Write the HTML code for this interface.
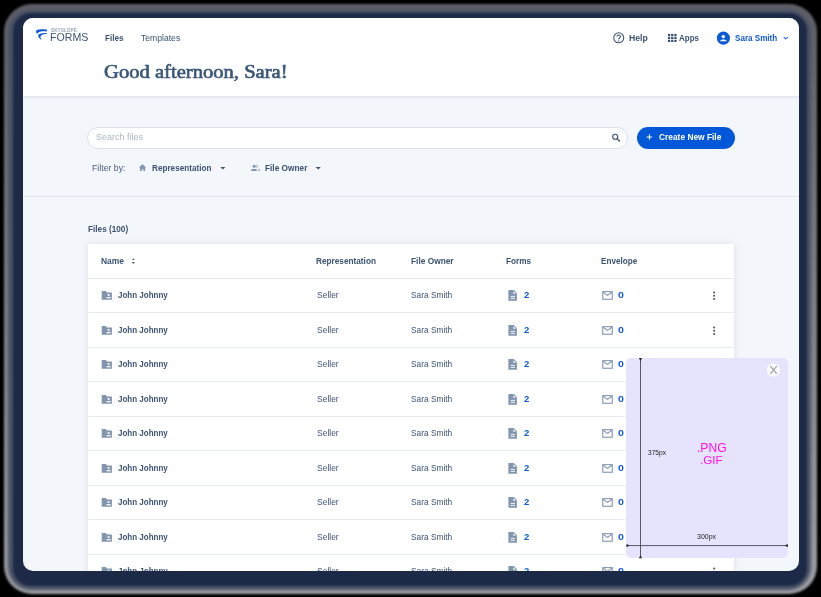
<!DOCTYPE html>
<html><head><meta charset="utf-8">
<style>
*{margin:0;padding:0;box-sizing:border-box}
html,body{width:821px;height:597px;overflow:hidden;background:#000}
body{position:relative;font-family:"Liberation Sans",sans-serif}
.abs{position:absolute}
.noise{position:absolute;left:4px;top:3.5px;width:813px;height:590px;border-radius:28px;background:linear-gradient(#5c5e66,#7c7e86 50%,#9c9ea4);filter:blur(0.8px)}
.noise2{position:absolute;left:8.4px;top:9.5px;width:803px;height:580px;border-radius:23px;background:#4a5164;filter:blur(1.5px)}
.shade{position:absolute;left:13.2px;top:13px;width:794.3px;height:572.5px;border-radius:18px;background:#1c2a48;filter:blur(1.2px)}
.card{position:absolute;left:23px;top:18px;width:776px;height:553px;border-radius:10px;overflow:hidden;background:#f3f6fb}
.header{position:absolute;left:0;top:0;width:776px;height:77.7px;background:#fff;box-shadow:0 1px 3px rgba(40,60,90,.13)}
.t{position:absolute;white-space:nowrap;line-height:1;transform-origin:0 0}
</style></head>
<body>
<div class="noise"></div>
<div class="noise2"></div>
<div class="shade"></div>
<div class="card">
<div class="header"></div>
<svg class="abs" style="left:10px;top:8px" width="18" height="17" viewBox="0 0 18 17">
<path d="M14 3.7 C10.5 3.1 6.5 3.2 4.2 3.9 C3.2 4.2 2.9 5.1 3.1 5.9 C3.3 6.8 4 7.5 4.4 7.8 C4.8 6.8 5.7 6.1 7.1 5.7 C9.1 5.2 12 5.3 14 5.5 Z" fill="#145ad8"/>
<path d="M14 6.9 C11 6.8 8.5 7.1 6.8 7.8 C5.5 8.4 5.0 9.5 5.3 10.6 C5.7 11.9 7.3 13.5 8.9 14.1 C7.8 12.8 7.2 11.3 7.6 10.2 C8.2 8.8 11 8.0 14 7.8 Z" fill="#145ad8"/>
</svg>
<svg class="abs" style="left:589px;top:13px" width="14" height="14" viewBox="612 31 14 14">
<circle cx="618.75" cy="37.8" r="5.0" fill="none" stroke="#3c5372" stroke-width="1.05"/>
<path d="M616.9 36.4 C616.9 35.5 617.7 35 618.7 35 C619.8 35 620.5 35.6 620.5 36.5 C620.5 37.6 618.8 37.8 618.75 38.9 L618.75 39.5" fill="none" stroke="#3c5372" stroke-width="1.05"/>
<circle cx="618.75" cy="41.0" r="0.65" fill="#3c5372"/>
</svg>
<svg class="abs" style="left:643px;top:14px" width="12" height="12" viewBox="666 32 12 12"><rect x="667.90" y="33.90" width="2.3" height="2.2" fill="#3c5372"/><rect x="667.90" y="36.85" width="2.3" height="2.2" fill="#3c5372"/><rect x="667.90" y="39.80" width="2.3" height="2.2" fill="#3c5372"/><rect x="671.10" y="33.90" width="2.3" height="2.2" fill="#3c5372"/><rect x="671.10" y="36.85" width="2.3" height="2.2" fill="#3c5372"/><rect x="671.10" y="39.80" width="2.3" height="2.2" fill="#3c5372"/><rect x="674.30" y="33.90" width="2.3" height="2.2" fill="#3c5372"/><rect x="674.30" y="36.85" width="2.3" height="2.2" fill="#3c5372"/><rect x="674.30" y="39.80" width="2.3" height="2.2" fill="#3c5372"/></svg>
<svg class="abs" style="left:692px;top:12px" width="17" height="17" viewBox="715 30 17 17">
<circle cx="723.4" cy="38.1" r="6.6" fill="#0d5bd9"/>
<circle cx="723.3" cy="36.6" r="1.7" fill="#fff"/>
<path d="M720.0 41.3 C720.3 40.0 721.6 39.4 723.3 39.4 C725.0 39.4 726.4 40.0 726.7 41.3 Z" fill="#fff"/>
</svg>
<svg class="abs" style="left:758px;top:17px" width="9" height="6" viewBox="781 35 9 6"><path d="M783.7 37.1 L785.7 38.9 L787.9 37.1" fill="none" stroke="#1a5fd9" stroke-width="1.1"/></svg>
<div class="abs" style="left:63.900000000000006px;top:109px;width:541.4px;height:21.6px;border-radius:11px;background:#fff;border:1px solid #d9e0ea"></div>
<svg class="abs" style="left:587px;top:113px" width="13" height="13" viewBox="610 131 13 13">
<circle cx="615.2" cy="136.7" r="2.5" fill="none" stroke="#3d5272" stroke-width="1.15"/>
<path d="M617.1 138.6 L619.9 141.4" stroke="#3d5272" stroke-width="1.35"/>
</svg>
<div class="abs" style="left:613.8px;top:109px;width:97.80000000000007px;height:21.6px;border-radius:11px;background:#0058d8"></div>
<svg class="abs" style="left:622px;top:115px" width="9" height="9" viewBox="645 133 9 9"><path d="M649.4 134.3 V139.8 M646.6 137.05 H652.2" stroke="#fff" stroke-width="1.0"/></svg>
<svg class="abs" style="left:115px;top:145px" width="10" height="9" viewBox="138 163 10 9"><path d="M142.45 164.3 L146.1 167.5 L145.15 167.5 L145.15 170.9 L143.3 170.9 L143.3 169.1 L141.8 169.1 L141.8 170.9 L140.0 170.9 L140.0 167.5 L138.9 167.5 Z" fill="#8195ae"/></svg>
<svg class="abs" style="left:196px;top:148px" width="8" height="5" viewBox="219 166 8 5"><path d="M220.3 167.0 H225.3 L222.8 169.5 Z" fill="#3c5372"/></svg>
<svg class="abs" style="left:227px;top:145px" width="11" height="9" viewBox="250 163 11 9">
<circle cx="254.2" cy="166.3" r="1.55" fill="#8195ae"/>
<path d="M256.5 164.9 A1.5 1.5 0 0 1 256.5 167.7" fill="none" stroke="#8195ae" stroke-width="1"/>
<path d="M251.05 171.0 V170.3 C251.05 169.4 252.2 168.9 254.0 168.9 C255.8 168.9 256.9 169.4 256.9 170.3 V171.0 Z" fill="#8195ae"/>
<path d="M258.3 169.0 C259.3 169.2 259.9 169.7 259.9 170.4 V171.0 H258.3 Z" fill="#8195ae"/>
</svg>
<svg class="abs" style="left:292px;top:148px" width="8" height="5" viewBox="315 166 8 5"><path d="M315.7 167.0 H320.8 L318.25 169.5 Z" fill="#3c5372"/></svg>
<div class="abs" style="left:0;top:178px;width:776px;height:1px;background:#dfe5ee"></div>
<div class="abs" style="left:64.8px;top:225.9px;width:646.3000000000001px;height:400px;background:#fff;box-shadow:0 0 6px rgba(60,80,110,.13)"></div>
<svg class="abs" style="left:107px;top:239px" width="6" height="8" viewBox="130 257 6 8"><path d="M133.35 258.5 L134.8 260.1 H131.9 Z M133.35 264.0 L134.8 262.1 H131.9 Z" fill="#3c5372"/></svg>
<div class="abs" style="left:64.5px;top:260px;width:646.6px;height:1px;background:#e2e8f0"></div>
<svg class="abs" style="left:77px;top:272.00px" width="14" height="11" viewBox="100 290 14 11"><path d="M101.7 291.05 H105.8 L107.0 292.6 H111.9 V299.7 H101.7 Z" fill="#8195ae"/><circle cx="108.6" cy="295.0" r="1.1" fill="#fff"/><rect x="106.5" y="297.1" width="4.2" height="1.2" fill="#fff"/></svg>
<svg class="abs" style="left:484px;top:271.00px" width="11" height="13" viewBox="507 289 11 13"><path d="M508.4 290.1 H513.7 L516.9 293.3 V300.8 H508.4 Z" fill="#8195ae"/><path d="M513.4 291.2 V293.7 H515.9 Z" fill="#fff"/><path d="M510.6 296.4 H515.0 M510.6 298.4 H515.0" stroke="#fff" stroke-width="0.9"/></svg>
<svg class="abs" style="left:578px;top:272.00px" width="13" height="11" viewBox="601 290 13 11"><rect x="602.75" y="291.65" width="9.5" height="7.6" fill="none" stroke="#8195ae" stroke-width="1.1"/><path d="M603.1 292.3 L607.5 295.4 L611.9 292.3" fill="none" stroke="#8195ae" stroke-width="1.1"/></svg>
<svg class="abs" style="left:689px;top:272.00px" width="5" height="11" viewBox="712 290 5 11"><circle cx="714.15" cy="292.5" r="1.0" fill="#4a4f58"/><circle cx="714.15" cy="295.75" r="1.0" fill="#4a4f58"/><circle cx="714.15" cy="298.9" r="1.0" fill="#4a4f58"/></svg>
<div class="abs" style="left:64.5px;top:294.40px;width:646.6px;height:1px;background:#e6ebf2"></div>
<svg class="abs" style="left:77px;top:306.50px" width="14" height="11" viewBox="100 290 14 11"><path d="M101.7 291.05 H105.8 L107.0 292.6 H111.9 V299.7 H101.7 Z" fill="#8195ae"/><circle cx="108.6" cy="295.0" r="1.1" fill="#fff"/><rect x="106.5" y="297.1" width="4.2" height="1.2" fill="#fff"/></svg>
<svg class="abs" style="left:484px;top:305.50px" width="11" height="13" viewBox="507 289 11 13"><path d="M508.4 290.1 H513.7 L516.9 293.3 V300.8 H508.4 Z" fill="#8195ae"/><path d="M513.4 291.2 V293.7 H515.9 Z" fill="#fff"/><path d="M510.6 296.4 H515.0 M510.6 298.4 H515.0" stroke="#fff" stroke-width="0.9"/></svg>
<svg class="abs" style="left:578px;top:306.50px" width="13" height="11" viewBox="601 290 13 11"><rect x="602.75" y="291.65" width="9.5" height="7.6" fill="none" stroke="#8195ae" stroke-width="1.1"/><path d="M603.1 292.3 L607.5 295.4 L611.9 292.3" fill="none" stroke="#8195ae" stroke-width="1.1"/></svg>
<svg class="abs" style="left:689px;top:306.50px" width="5" height="11" viewBox="712 290 5 11"><circle cx="714.15" cy="292.5" r="1.0" fill="#4a4f58"/><circle cx="714.15" cy="295.75" r="1.0" fill="#4a4f58"/><circle cx="714.15" cy="298.9" r="1.0" fill="#4a4f58"/></svg>
<div class="abs" style="left:64.5px;top:328.90px;width:646.6px;height:1px;background:#e6ebf2"></div>
<svg class="abs" style="left:77px;top:341.00px" width="14" height="11" viewBox="100 290 14 11"><path d="M101.7 291.05 H105.8 L107.0 292.6 H111.9 V299.7 H101.7 Z" fill="#8195ae"/><circle cx="108.6" cy="295.0" r="1.1" fill="#fff"/><rect x="106.5" y="297.1" width="4.2" height="1.2" fill="#fff"/></svg>
<svg class="abs" style="left:484px;top:340.00px" width="11" height="13" viewBox="507 289 11 13"><path d="M508.4 290.1 H513.7 L516.9 293.3 V300.8 H508.4 Z" fill="#8195ae"/><path d="M513.4 291.2 V293.7 H515.9 Z" fill="#fff"/><path d="M510.6 296.4 H515.0 M510.6 298.4 H515.0" stroke="#fff" stroke-width="0.9"/></svg>
<svg class="abs" style="left:578px;top:341.00px" width="13" height="11" viewBox="601 290 13 11"><rect x="602.75" y="291.65" width="9.5" height="7.6" fill="none" stroke="#8195ae" stroke-width="1.1"/><path d="M603.1 292.3 L607.5 295.4 L611.9 292.3" fill="none" stroke="#8195ae" stroke-width="1.1"/></svg>
<svg class="abs" style="left:689px;top:341.00px" width="5" height="11" viewBox="712 290 5 11"><circle cx="714.15" cy="292.5" r="1.0" fill="#4a4f58"/><circle cx="714.15" cy="295.75" r="1.0" fill="#4a4f58"/><circle cx="714.15" cy="298.9" r="1.0" fill="#4a4f58"/></svg>
<div class="abs" style="left:64.5px;top:363.40px;width:646.6px;height:1px;background:#e6ebf2"></div>
<svg class="abs" style="left:77px;top:375.50px" width="14" height="11" viewBox="100 290 14 11"><path d="M101.7 291.05 H105.8 L107.0 292.6 H111.9 V299.7 H101.7 Z" fill="#8195ae"/><circle cx="108.6" cy="295.0" r="1.1" fill="#fff"/><rect x="106.5" y="297.1" width="4.2" height="1.2" fill="#fff"/></svg>
<svg class="abs" style="left:484px;top:374.50px" width="11" height="13" viewBox="507 289 11 13"><path d="M508.4 290.1 H513.7 L516.9 293.3 V300.8 H508.4 Z" fill="#8195ae"/><path d="M513.4 291.2 V293.7 H515.9 Z" fill="#fff"/><path d="M510.6 296.4 H515.0 M510.6 298.4 H515.0" stroke="#fff" stroke-width="0.9"/></svg>
<svg class="abs" style="left:578px;top:375.50px" width="13" height="11" viewBox="601 290 13 11"><rect x="602.75" y="291.65" width="9.5" height="7.6" fill="none" stroke="#8195ae" stroke-width="1.1"/><path d="M603.1 292.3 L607.5 295.4 L611.9 292.3" fill="none" stroke="#8195ae" stroke-width="1.1"/></svg>
<svg class="abs" style="left:689px;top:375.50px" width="5" height="11" viewBox="712 290 5 11"><circle cx="714.15" cy="292.5" r="1.0" fill="#4a4f58"/><circle cx="714.15" cy="295.75" r="1.0" fill="#4a4f58"/><circle cx="714.15" cy="298.9" r="1.0" fill="#4a4f58"/></svg>
<div class="abs" style="left:64.5px;top:397.90px;width:646.6px;height:1px;background:#e6ebf2"></div>
<svg class="abs" style="left:77px;top:410.00px" width="14" height="11" viewBox="100 290 14 11"><path d="M101.7 291.05 H105.8 L107.0 292.6 H111.9 V299.7 H101.7 Z" fill="#8195ae"/><circle cx="108.6" cy="295.0" r="1.1" fill="#fff"/><rect x="106.5" y="297.1" width="4.2" height="1.2" fill="#fff"/></svg>
<svg class="abs" style="left:484px;top:409.00px" width="11" height="13" viewBox="507 289 11 13"><path d="M508.4 290.1 H513.7 L516.9 293.3 V300.8 H508.4 Z" fill="#8195ae"/><path d="M513.4 291.2 V293.7 H515.9 Z" fill="#fff"/><path d="M510.6 296.4 H515.0 M510.6 298.4 H515.0" stroke="#fff" stroke-width="0.9"/></svg>
<svg class="abs" style="left:578px;top:410.00px" width="13" height="11" viewBox="601 290 13 11"><rect x="602.75" y="291.65" width="9.5" height="7.6" fill="none" stroke="#8195ae" stroke-width="1.1"/><path d="M603.1 292.3 L607.5 295.4 L611.9 292.3" fill="none" stroke="#8195ae" stroke-width="1.1"/></svg>
<svg class="abs" style="left:689px;top:410.00px" width="5" height="11" viewBox="712 290 5 11"><circle cx="714.15" cy="292.5" r="1.0" fill="#4a4f58"/><circle cx="714.15" cy="295.75" r="1.0" fill="#4a4f58"/><circle cx="714.15" cy="298.9" r="1.0" fill="#4a4f58"/></svg>
<div class="abs" style="left:64.5px;top:432.40px;width:646.6px;height:1px;background:#e6ebf2"></div>
<svg class="abs" style="left:77px;top:444.50px" width="14" height="11" viewBox="100 290 14 11"><path d="M101.7 291.05 H105.8 L107.0 292.6 H111.9 V299.7 H101.7 Z" fill="#8195ae"/><circle cx="108.6" cy="295.0" r="1.1" fill="#fff"/><rect x="106.5" y="297.1" width="4.2" height="1.2" fill="#fff"/></svg>
<svg class="abs" style="left:484px;top:443.50px" width="11" height="13" viewBox="507 289 11 13"><path d="M508.4 290.1 H513.7 L516.9 293.3 V300.8 H508.4 Z" fill="#8195ae"/><path d="M513.4 291.2 V293.7 H515.9 Z" fill="#fff"/><path d="M510.6 296.4 H515.0 M510.6 298.4 H515.0" stroke="#fff" stroke-width="0.9"/></svg>
<svg class="abs" style="left:578px;top:444.50px" width="13" height="11" viewBox="601 290 13 11"><rect x="602.75" y="291.65" width="9.5" height="7.6" fill="none" stroke="#8195ae" stroke-width="1.1"/><path d="M603.1 292.3 L607.5 295.4 L611.9 292.3" fill="none" stroke="#8195ae" stroke-width="1.1"/></svg>
<svg class="abs" style="left:689px;top:444.50px" width="5" height="11" viewBox="712 290 5 11"><circle cx="714.15" cy="292.5" r="1.0" fill="#4a4f58"/><circle cx="714.15" cy="295.75" r="1.0" fill="#4a4f58"/><circle cx="714.15" cy="298.9" r="1.0" fill="#4a4f58"/></svg>
<div class="abs" style="left:64.5px;top:466.90px;width:646.6px;height:1px;background:#e6ebf2"></div>
<svg class="abs" style="left:77px;top:479.00px" width="14" height="11" viewBox="100 290 14 11"><path d="M101.7 291.05 H105.8 L107.0 292.6 H111.9 V299.7 H101.7 Z" fill="#8195ae"/><circle cx="108.6" cy="295.0" r="1.1" fill="#fff"/><rect x="106.5" y="297.1" width="4.2" height="1.2" fill="#fff"/></svg>
<svg class="abs" style="left:484px;top:478.00px" width="11" height="13" viewBox="507 289 11 13"><path d="M508.4 290.1 H513.7 L516.9 293.3 V300.8 H508.4 Z" fill="#8195ae"/><path d="M513.4 291.2 V293.7 H515.9 Z" fill="#fff"/><path d="M510.6 296.4 H515.0 M510.6 298.4 H515.0" stroke="#fff" stroke-width="0.9"/></svg>
<svg class="abs" style="left:578px;top:479.00px" width="13" height="11" viewBox="601 290 13 11"><rect x="602.75" y="291.65" width="9.5" height="7.6" fill="none" stroke="#8195ae" stroke-width="1.1"/><path d="M603.1 292.3 L607.5 295.4 L611.9 292.3" fill="none" stroke="#8195ae" stroke-width="1.1"/></svg>
<svg class="abs" style="left:689px;top:479.00px" width="5" height="11" viewBox="712 290 5 11"><circle cx="714.15" cy="292.5" r="1.0" fill="#4a4f58"/><circle cx="714.15" cy="295.75" r="1.0" fill="#4a4f58"/><circle cx="714.15" cy="298.9" r="1.0" fill="#4a4f58"/></svg>
<div class="abs" style="left:64.5px;top:501.40px;width:646.6px;height:1px;background:#e6ebf2"></div>
<svg class="abs" style="left:77px;top:513.50px" width="14" height="11" viewBox="100 290 14 11"><path d="M101.7 291.05 H105.8 L107.0 292.6 H111.9 V299.7 H101.7 Z" fill="#8195ae"/><circle cx="108.6" cy="295.0" r="1.1" fill="#fff"/><rect x="106.5" y="297.1" width="4.2" height="1.2" fill="#fff"/></svg>
<svg class="abs" style="left:484px;top:512.50px" width="11" height="13" viewBox="507 289 11 13"><path d="M508.4 290.1 H513.7 L516.9 293.3 V300.8 H508.4 Z" fill="#8195ae"/><path d="M513.4 291.2 V293.7 H515.9 Z" fill="#fff"/><path d="M510.6 296.4 H515.0 M510.6 298.4 H515.0" stroke="#fff" stroke-width="0.9"/></svg>
<svg class="abs" style="left:578px;top:513.50px" width="13" height="11" viewBox="601 290 13 11"><rect x="602.75" y="291.65" width="9.5" height="7.6" fill="none" stroke="#8195ae" stroke-width="1.1"/><path d="M603.1 292.3 L607.5 295.4 L611.9 292.3" fill="none" stroke="#8195ae" stroke-width="1.1"/></svg>
<svg class="abs" style="left:689px;top:513.50px" width="5" height="11" viewBox="712 290 5 11"><circle cx="714.15" cy="292.5" r="1.0" fill="#4a4f58"/><circle cx="714.15" cy="295.75" r="1.0" fill="#4a4f58"/><circle cx="714.15" cy="298.9" r="1.0" fill="#4a4f58"/></svg>
<div class="abs" style="left:64.5px;top:535.90px;width:646.6px;height:1px;background:#e6ebf2"></div>
<svg class="abs" style="left:77px;top:548.00px" width="14" height="11" viewBox="100 290 14 11"><path d="M101.7 291.05 H105.8 L107.0 292.6 H111.9 V299.7 H101.7 Z" fill="#8195ae"/><circle cx="108.6" cy="295.0" r="1.1" fill="#fff"/><rect x="106.5" y="297.1" width="4.2" height="1.2" fill="#fff"/></svg>
<svg class="abs" style="left:484px;top:547.00px" width="11" height="13" viewBox="507 289 11 13"><path d="M508.4 290.1 H513.7 L516.9 293.3 V300.8 H508.4 Z" fill="#8195ae"/><path d="M513.4 291.2 V293.7 H515.9 Z" fill="#fff"/><path d="M510.6 296.4 H515.0 M510.6 298.4 H515.0" stroke="#fff" stroke-width="0.9"/></svg>
<svg class="abs" style="left:578px;top:548.00px" width="13" height="11" viewBox="601 290 13 11"><rect x="602.75" y="291.65" width="9.5" height="7.6" fill="none" stroke="#8195ae" stroke-width="1.1"/><path d="M603.1 292.3 L607.5 295.4 L611.9 292.3" fill="none" stroke="#8195ae" stroke-width="1.1"/></svg>
<svg class="abs" style="left:689px;top:548.00px" width="5" height="11" viewBox="712 290 5 11"><circle cx="714.15" cy="292.5" r="1.0" fill="#4a4f58"/><circle cx="714.15" cy="295.75" r="1.0" fill="#4a4f58"/><circle cx="714.15" cy="298.9" r="1.0" fill="#4a4f58"/></svg>
<div class="abs" style="left:64.5px;top:570.40px;width:646.6px;height:1px;background:#e6ebf2"></div>
<div class="t" style="left:81.62px;top:14.57px;font:bold 8.55px 'Liberation Sans';color:#3c5372;transform:scaleX(0.9504);">Files</div>
<div class="t" style="left:118.00px;top:14.59px;font:normal 8.48px 'Liberation Sans';color:#3c5372;transform:scaleX(1.0158);">Templates</div>
<div class="t" style="left:606.41px;top:15.24px;font:bold 8.77px 'Liberation Sans';color:#3c5372;transform:scaleX(0.9866);">Help</div>
<div class="t" style="left:656.02px;top:15.24px;font:bold 8.77px 'Liberation Sans';color:#3c5372;transform:scaleX(0.9094);">Apps</div>
<div class="t" style="left:711.51px;top:15.45px;font:bold 8.70px 'Liberation Sans';color:#0f58d6;transform:scaleX(0.9305);">Sara Smith</div>
<div class="t" style="left:27.04px;top:13.28px;font:normal 11.09px 'Liberation Sans';color:#3b5574;transform:scaleX(0.9577);">FORMS</div>
<div class="t" style="left:28.10px;top:9.98px;font:bold 4.64px 'Liberation Sans';color:#9aa7b8;transform:scaleX(1.0258);">SKYSLOPE</div>
<div class="t" style="left:80.93px;top:42.92px;font:normal 18.78px 'Liberation Serif';color:#3a5779;transform:scaleX(1.0977);-webkit-text-stroke:0.65px #3a5779;">Good afternoon, Sara!</div>
<div class="t" style="left:73.29px;top:113.84px;font:normal 8.78px 'Liberation Sans';color:#aab6c6;transform:scaleX(1.0246);">Search files</div>
<div class="t" style="left:635.60px;top:114.62px;font:bold 8.26px 'Liberation Sans';color:#ffffff;transform:scaleX(1.0145);">Create New File</div>
<div class="t" style="left:69.21px;top:145.23px;font:normal 8.84px 'Liberation Sans';color:#4d5f78;transform:scaleX(0.9897);">Filter by:</div>
<div class="t" style="left:128.74px;top:145.23px;font:bold 8.84px 'Liberation Sans';color:#3c5372;transform:scaleX(0.9251);">Representation</div>
<div class="t" style="left:241.73px;top:145.23px;font:bold 8.84px 'Liberation Sans';color:#3c5372;transform:scaleX(0.9384);">File Owner</div>
<div class="t" style="left:65.15px;top:206.21px;font:bold 8.99px 'Liberation Sans';color:#3c5372;transform:scaleX(0.9127);">Files (100)</div>
<div class="t" style="left:77.51px;top:237.67px;font:bold 8.55px 'Liberation Sans';color:#3c5372;transform:scaleX(0.9897);">Name</div>
<div class="t" style="left:292.72px;top:237.67px;font:bold 8.55px 'Liberation Sans';color:#3c5372;transform:scaleX(0.9638);">Representation</div>
<div class="t" style="left:388.01px;top:237.67px;font:bold 8.55px 'Liberation Sans';color:#3c5372;transform:scaleX(0.9749);">File Owner</div>
<div class="t" style="left:482.82px;top:237.67px;font:bold 8.55px 'Liberation Sans';color:#3c5372;transform:scaleX(0.9616);">Forms</div>
<div class="t" style="left:577.72px;top:237.67px;font:bold 8.55px 'Liberation Sans';color:#3c5372;transform:scaleX(0.9555);">Envelope</div>
<div class="t" style="left:94.91px;top:272.33px;font:bold 8.84px 'Liberation Sans';color:#3c5372;transform:scaleX(0.9056);">John Johnny</div>
<div class="t" style="left:293.52px;top:272.33px;font:normal 8.84px 'Liberation Sans';color:#3d5373;transform:scaleX(0.9612);">Seller</div>
<div class="t" style="left:388.42px;top:272.33px;font:normal 8.84px 'Liberation Sans';color:#3d5373;transform:scaleX(0.9438);">Sara Smith</div>
<div class="t" style="left:500.57px;top:272.35px;font:bold 8.70px 'Liberation Sans';color:#0a58d8;transform:scaleX(1.0952);">2</div>
<div class="t" style="left:595.14px;top:272.35px;font:bold 8.70px 'Liberation Sans';color:#0a58d8;transform:scaleX(1.2143);">0</div>
<div class="t" style="left:94.91px;top:306.83px;font:bold 8.84px 'Liberation Sans';color:#3c5372;transform:scaleX(0.9056);">John Johnny</div>
<div class="t" style="left:293.52px;top:306.83px;font:normal 8.84px 'Liberation Sans';color:#3d5373;transform:scaleX(0.9612);">Seller</div>
<div class="t" style="left:388.42px;top:306.83px;font:normal 8.84px 'Liberation Sans';color:#3d5373;transform:scaleX(0.9438);">Sara Smith</div>
<div class="t" style="left:500.57px;top:306.85px;font:bold 8.70px 'Liberation Sans';color:#0a58d8;transform:scaleX(1.0952);">2</div>
<div class="t" style="left:595.14px;top:306.85px;font:bold 8.70px 'Liberation Sans';color:#0a58d8;transform:scaleX(1.2143);">0</div>
<div class="t" style="left:94.91px;top:341.33px;font:bold 8.84px 'Liberation Sans';color:#3c5372;transform:scaleX(0.9056);">John Johnny</div>
<div class="t" style="left:293.52px;top:341.33px;font:normal 8.84px 'Liberation Sans';color:#3d5373;transform:scaleX(0.9612);">Seller</div>
<div class="t" style="left:388.42px;top:341.33px;font:normal 8.84px 'Liberation Sans';color:#3d5373;transform:scaleX(0.9438);">Sara Smith</div>
<div class="t" style="left:500.57px;top:341.35px;font:bold 8.70px 'Liberation Sans';color:#0a58d8;transform:scaleX(1.0952);">2</div>
<div class="t" style="left:595.14px;top:341.35px;font:bold 8.70px 'Liberation Sans';color:#0a58d8;transform:scaleX(1.2143);">0</div>
<div class="t" style="left:94.91px;top:375.83px;font:bold 8.84px 'Liberation Sans';color:#3c5372;transform:scaleX(0.9056);">John Johnny</div>
<div class="t" style="left:293.52px;top:375.83px;font:normal 8.84px 'Liberation Sans';color:#3d5373;transform:scaleX(0.9612);">Seller</div>
<div class="t" style="left:388.42px;top:375.83px;font:normal 8.84px 'Liberation Sans';color:#3d5373;transform:scaleX(0.9438);">Sara Smith</div>
<div class="t" style="left:500.57px;top:375.85px;font:bold 8.70px 'Liberation Sans';color:#0a58d8;transform:scaleX(1.0952);">2</div>
<div class="t" style="left:595.14px;top:375.85px;font:bold 8.70px 'Liberation Sans';color:#0a58d8;transform:scaleX(1.2143);">0</div>
<div class="t" style="left:94.91px;top:410.33px;font:bold 8.84px 'Liberation Sans';color:#3c5372;transform:scaleX(0.9056);">John Johnny</div>
<div class="t" style="left:293.52px;top:410.33px;font:normal 8.84px 'Liberation Sans';color:#3d5373;transform:scaleX(0.9612);">Seller</div>
<div class="t" style="left:388.42px;top:410.33px;font:normal 8.84px 'Liberation Sans';color:#3d5373;transform:scaleX(0.9438);">Sara Smith</div>
<div class="t" style="left:500.57px;top:410.35px;font:bold 8.70px 'Liberation Sans';color:#0a58d8;transform:scaleX(1.0952);">2</div>
<div class="t" style="left:595.14px;top:410.35px;font:bold 8.70px 'Liberation Sans';color:#0a58d8;transform:scaleX(1.2143);">0</div>
<div class="t" style="left:94.91px;top:444.83px;font:bold 8.84px 'Liberation Sans';color:#3c5372;transform:scaleX(0.9056);">John Johnny</div>
<div class="t" style="left:293.52px;top:444.83px;font:normal 8.84px 'Liberation Sans';color:#3d5373;transform:scaleX(0.9612);">Seller</div>
<div class="t" style="left:388.42px;top:444.83px;font:normal 8.84px 'Liberation Sans';color:#3d5373;transform:scaleX(0.9438);">Sara Smith</div>
<div class="t" style="left:500.57px;top:444.85px;font:bold 8.70px 'Liberation Sans';color:#0a58d8;transform:scaleX(1.0952);">2</div>
<div class="t" style="left:595.14px;top:444.85px;font:bold 8.70px 'Liberation Sans';color:#0a58d8;transform:scaleX(1.2143);">0</div>
<div class="t" style="left:94.91px;top:479.33px;font:bold 8.84px 'Liberation Sans';color:#3c5372;transform:scaleX(0.9056);">John Johnny</div>
<div class="t" style="left:293.52px;top:479.33px;font:normal 8.84px 'Liberation Sans';color:#3d5373;transform:scaleX(0.9612);">Seller</div>
<div class="t" style="left:388.42px;top:479.33px;font:normal 8.84px 'Liberation Sans';color:#3d5373;transform:scaleX(0.9438);">Sara Smith</div>
<div class="t" style="left:500.57px;top:479.35px;font:bold 8.70px 'Liberation Sans';color:#0a58d8;transform:scaleX(1.0952);">2</div>
<div class="t" style="left:595.14px;top:479.35px;font:bold 8.70px 'Liberation Sans';color:#0a58d8;transform:scaleX(1.2143);">0</div>
<div class="t" style="left:94.91px;top:513.83px;font:bold 8.84px 'Liberation Sans';color:#3c5372;transform:scaleX(0.9056);">John Johnny</div>
<div class="t" style="left:293.52px;top:513.83px;font:normal 8.84px 'Liberation Sans';color:#3d5373;transform:scaleX(0.9612);">Seller</div>
<div class="t" style="left:388.42px;top:513.83px;font:normal 8.84px 'Liberation Sans';color:#3d5373;transform:scaleX(0.9438);">Sara Smith</div>
<div class="t" style="left:500.57px;top:513.85px;font:bold 8.70px 'Liberation Sans';color:#0a58d8;transform:scaleX(1.0952);">2</div>
<div class="t" style="left:595.14px;top:513.85px;font:bold 8.70px 'Liberation Sans';color:#0a58d8;transform:scaleX(1.2143);">0</div>
<div class="t" style="left:94.91px;top:548.33px;font:bold 8.84px 'Liberation Sans';color:#3c5372;transform:scaleX(0.9056);">John Johnny</div>
<div class="t" style="left:293.52px;top:548.33px;font:normal 8.84px 'Liberation Sans';color:#3d5373;transform:scaleX(0.9612);">Seller</div>
<div class="t" style="left:388.42px;top:548.33px;font:normal 8.84px 'Liberation Sans';color:#3d5373;transform:scaleX(0.9438);">Sara Smith</div>
<div class="t" style="left:500.57px;top:548.35px;font:bold 8.70px 'Liberation Sans';color:#0a58d8;transform:scaleX(1.0952);">2</div>
<div class="t" style="left:595.14px;top:548.35px;font:bold 8.70px 'Liberation Sans';color:#0a58d8;transform:scaleX(1.2143);">0</div>
<div class="abs" style="left:603.2px;top:339.6px;width:161.5999999999999px;height:200.79999999999995px;border-radius:5px;background:#e6e3fe"></div>
<svg class="abs" style="left:597px;top:337px" width="172" height="206" viewBox="620 355 172 206">
<path d="M640.5 358.5 V558" stroke="#50505c" stroke-width="0.95"/>
<path d="M638.9 357.9 H642.1 L640.5 361.2Z M638.9 558.3 H642.1 L640.5 555.0Z" fill="#2a2a2a"/>
<path d="M627 545.6 H787.5" stroke="#50505c" stroke-width="0.95"/>
<path d="M626.4 544.0 V547.2 L629.7 545.6Z M787.9 544.0 V547.2 L784.6 545.6Z" fill="#2a2a2a"/>
<circle cx="773.4" cy="370.1" r="6.6" fill="#fdfcff"/>
<path d="M770.3 366.1 L776.8 373.8 M776.8 366.1 L770.3 373.8" stroke="#9b99a2" stroke-width="1.15"/>
</svg>
<div class="t" style="left:625.12px;top:429.88px;font:normal 7.25px 'Liberation Sans';color:#222;transform:scaleX(0.9069);">375px</div>
<div class="t" style="left:674.01px;top:514.48px;font:normal 7.25px 'Liberation Sans';color:#222;transform:scaleX(0.9632);">300px</div>
<div class="t" style="left:674.19px;top:422.74px;font:normal 12.03px 'Liberation Sans';color:#ff12ea;transform:scaleX(1.0055);">.PNG</div>
<div class="t" style="left:677.49px;top:436.20px;font:normal 11.59px 'Liberation Sans';color:#ff12ea;transform:scaleX(1.0066);">.GIF</div>
</div>
</body></html>
